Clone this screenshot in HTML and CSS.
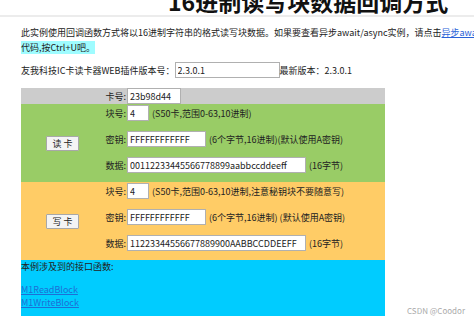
FILE: index.html
```html
<!DOCTYPE html>
<html lang="zh-CN">
<head>
    <meta charset="UTF-8">
    <meta name="viewport" content="width=device-width, initial-scale=1.0">
    <title>M1卡以16进制读写块数据回调方式</title>
    <link rel="stylesheet" href="styles.css">
</head>
<body>
    <header class="top">
        <h1>16进制读写块数据回调方式</h1>
    </header>

    <div class="page">
        <p class="intro">
            此实例使用回调函数方式将以16进制字符串的格式读写块数据。如果要查看异步await/async实例，请点击<a href="#">异步await/async实例</a>。<span class="tip">想查看本页源<br>代码,按Ctrl+U吧。</span>
        </p>

        <div class="version">
            友我科技IC卡读卡器WEB插件版本号：<input class="ver" type="text" value="2.3.0.1">最新版本：2.3.0.1
        </div>

        <div class="card">
            <div class="card-id">
                <span class="lbl">卡号:</span><input class="in-id" type="text" value="23b98d44">
            </div>

            <section class="block read">
                <div class="act"><button class="btn">读 卡</button></div>
                <div class="fields">
                    <div class="field"><span class="lbl">块号:</span><input class="in-blk" type="text" value="4"><span class="note">(S50卡,范围0-63,10进制)</span></div>
                    <div class="field"><span class="lbl">密钥:</span><input class="in-key" type="text" value="FFFFFFFFFFFF"><span class="note">(6个字节,16进制)(默认使用A密钥)</span></div>
                    <div class="field"><span class="lbl">数据:</span><input class="in-data" type="text" value="00112233445566778899aabbccddeeff"><span class="note">(16字节)</span></div>
                </div>
            </section>

            <section class="block write">
                <div class="act"><button class="btn">写 卡</button></div>
                <div class="fields">
                    <div class="field"><span class="lbl">块号:</span><input class="in-blk" type="text" value="4"><span class="note">(S50卡,范围0-63,10进制,注意秘钥块不要随意写)</span></div>
                    <div class="field"><span class="lbl">密钥:</span><input class="in-key" type="text" value="FFFFFFFFFFFF"><span class="note">(6个字节,16进制) (默认使用A密钥)</span></div>
                    <div class="field"><span class="lbl">数据:</span><input class="in-data" type="text" value="11223344556677889900AABBCCDDEEFF"><span class="note">(16字节)</span></div>
                </div>
            </section>

            <div class="api">
                <p>本例涉及到的接口函数:</p>
                <a href="#">M1ReadBlock</a><br>
                <a href="#">M1WriteBlock</a>
            </div>
        </div>
    </div>

    <div class="mark">CSDN @Coodor</div>
</body>
</html>
```

FILE: styles.css
```css
html, body {
    margin: 0;
    overflow: hidden;
}
body {
    font-family: "Noto Sans CJK SC", "Noto Sans", sans-serif;
    font-size: 9px;
    color: #222;
    background: #fff;
    position: relative;
    height: 320px;
}
.top {
    height: 15px;
    display: flex;
    align-items: flex-end;
    border-bottom: 2px solid #ececec;
    overflow: hidden;
}
.top h1 {
    margin: 0 0 2px 168px;
    font-size: 23px;
    line-height: 23px;
    white-space: nowrap;
    color: #111;
}
.page {
    padding: 0 21px;
}
.intro {
    margin: 8px 0 0;
    line-height: 15px;
    white-space: nowrap;
}
.intro a { color: #2a62d8; }
.tip { background: #9ffcff; }

.version {
    display: flex;
    align-items: center;
    margin-top: 7px;
    height: 16px;
}
input {
    font-family: inherit;
    font-size: 9px;
    color: #222;
    box-sizing: border-box;
    height: 16px;
    margin: 0;
    padding: 0 2px;
    border: 1px solid #b0b0b0;
    background: #fff;
}
.ver { width: 105px; }

.card {
    width: 364px;
    margin-top: 10px;
}
.card-id {
    display: flex;
    align-items: center;
    background: #cccccc;
    padding-left: 83px;
    height: 16px;
}
.lbl {
    width: 22px;
    text-align: right;
    margin-right: 1px;
    white-space: nowrap;
}
.in-id { width: 54px; }
.in-blk { width: 22px; }
.in-key { width: 79px; }
.in-data { width: 179px; }

.block {
    display: flex;
    height: 78px;
}
.read { background: #99cc66; }
.write { background: #ffcc66; }
.act {
    width: 83px;
    display: flex;
    align-items: center;
    justify-content: center;
}
.btn {
    font-family: inherit;
    font-size: 9px;
    color: #222;
    padding: 0 5px;
    height: 15px;
    line-height: 13px;
    background: #f4f4f4;
    border: 1px solid #a8a8a8;
    border-radius: 1px;
}
.fields {
    display: flex;
    flex-direction: column;
}
.field {
    display: flex;
    align-items: center;
    height: 16px;
    margin: 1px 0 9px;
    white-space: nowrap;
}
.note { margin-left: 3px; }

.api {
    background: #00ccff;
    padding: 0 0 7px;
    line-height: 13px;
}
.api p {
    margin: 0 0 10px;
}
.api a { color: #1d6fd6; }

.mark {
    position: absolute;
    right: 9px;
    bottom: 4px;
    font-size: 8px;
    color: #aaa;
}
```
